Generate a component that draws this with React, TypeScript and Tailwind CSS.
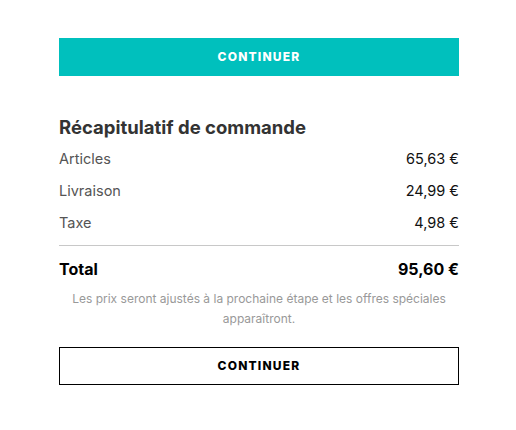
export default function App() {
  const rows = [
    { label: 'Articles', value: '65,63 €' },
    { label: 'Livraison', value: '24,99 €' },
    { label: 'Taxe', value: '4,98 €' },
  ]

  return (
    <div className="min-h-[430px] w-[516px] bg-white font-['Inter',sans-serif]">
      <div className="ml-[59px] w-[400px] pt-[38px]">
        <button className="flex h-[38px] w-full items-center justify-center bg-[#00c0bd] text-[12px] font-extrabold tracking-[0.1em] text-white">
          CONTINUER
        </button>

        <h2 className="mt-[39px] text-[18.5px] font-bold leading-[24px] text-[#333]">
          Récapitulatif de commande
        </h2>

        <div className="mt-[4px] flex flex-col">
          {rows.map((row) => (
            <div key={row.label} className="flex h-[32px] items-center justify-between text-[14.5px]">
              <span className="text-[#555]">{row.label}</span>
              <span className="text-[#111]">{row.value}</span>
            </div>
          ))}
        </div>

        <div className="mt-[6px] border-t border-[#c8c8c8]" />

        <div className="mt-[12px] flex items-center justify-between text-[16px] font-bold leading-[22px] text-black">
          <span>Total</span>
          <span>95,60 €</span>
        </div>

        <p className="mt-[9px] px-[6px] text-center text-[12px] leading-[20px] text-[#999]">
          Les prix seront ajustés à la prochaine étape et les offres spéciales apparaîtront.
        </p>

        <button className="mt-[18px] flex h-[38px] w-full items-center justify-center border border-black text-[12px] font-extrabold tracking-[0.1em] text-black">
          CONTINUER
        </button>
      </div>
    </div>
  )
}
